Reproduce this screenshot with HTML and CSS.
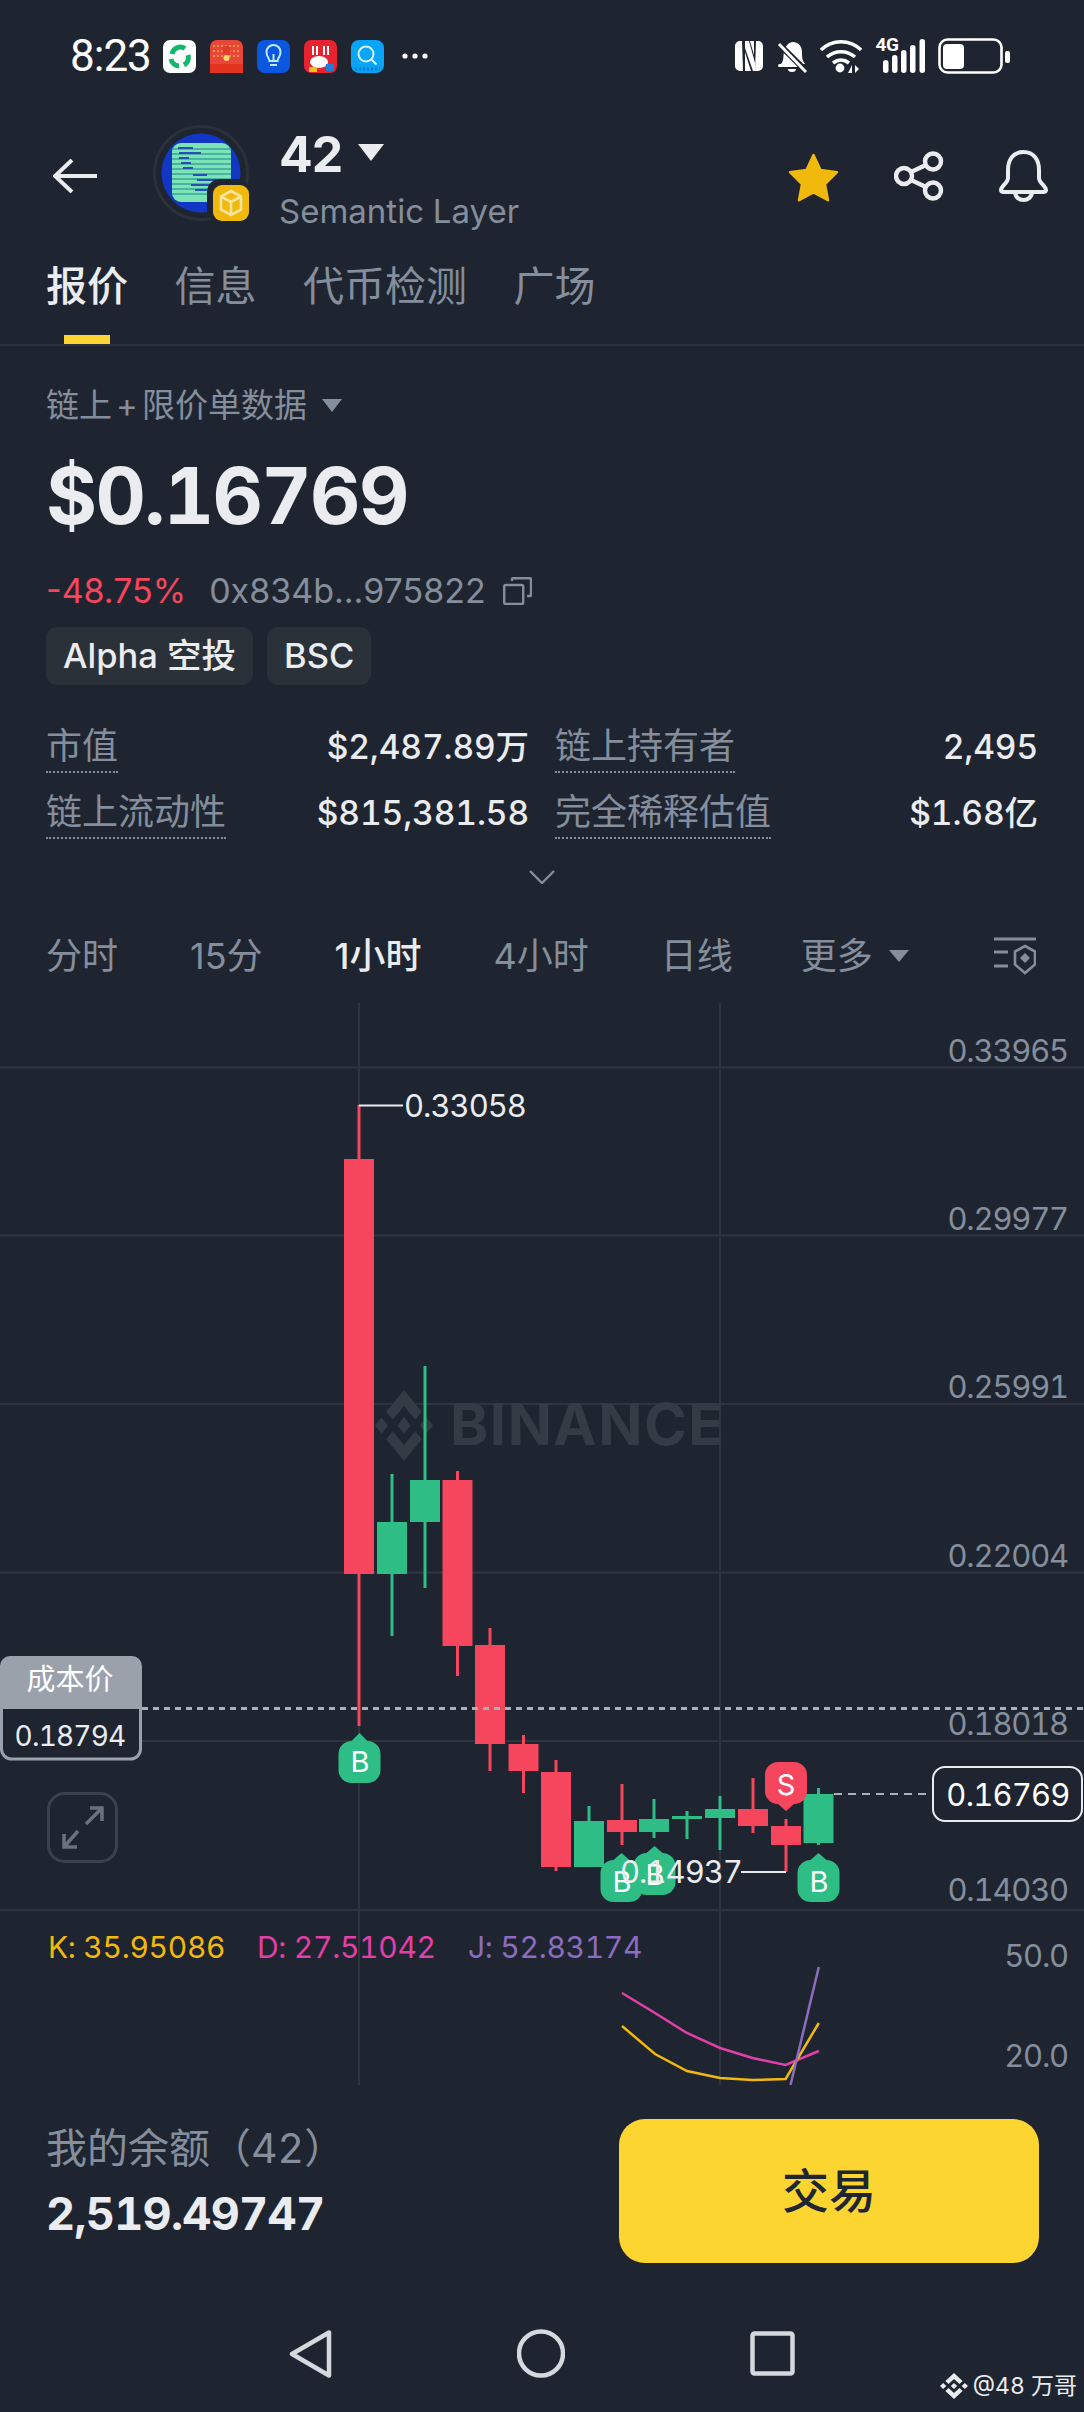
FILE: index.html
```html
<!DOCTYPE html>
<html lang="zh">
<head>
<meta charset="utf-8">
<title>42 Semantic Layer</title>
<link rel="stylesheet" href="styles.css">
</head>
<body>
<div class="page">
  <div class="status">
    <span class="time">8:23</span>
    <div class="apps">
      <svg class="app" viewBox="0 0 33 33"><rect width="33" height="33" rx="7" fill="#fff"/><path d="M9 14a8.500 8.500 0 0 1 13-5.500M25 15a8.500 8.500 0 0 1-4 10M16 26a8.500 8.500 0 0 1-8-7" fill="none" stroke="#12b76a" stroke-width="5"/></svg>
      <svg class="app" viewBox="0 0 33 33"><rect width="33" height="33" rx="7" fill="#e8463a"/><path d="M3 6h27M3 11h27M3 16h27" stroke="#f2913f" stroke-width="2" stroke-dasharray="2 2"/><rect y="24" width="33" height="9" fill="#e2331f"/><circle cx="16.500" cy="10" r="4" fill="#e23a28"/><circle cx="16.500" cy="18" r="3" fill="#ffd76a"/></svg>
      <svg class="app" viewBox="0 0 33 33"><rect width="33" height="33" rx="8" fill="#0b57e0"/><path d="M12.500 21c0-3-3-4-3-9a7 7 0 0 1 14 0c0 5-3 6-3 9zM13 25h7M16.500 21v-7" fill="none" stroke="#bfe9ff" stroke-width="2"/></svg>
      <svg class="app" viewBox="0 0 33 33"><rect width="33" height="33" rx="7" fill="#e8232f"/><path d="M9 6v9M13 6v9M20 6v9M24 6v9" stroke="#fff" stroke-width="2"/><ellipse cx="15" cy="22" rx="9" ry="6" fill="#fff"/><rect x="5" y="27" width="8" height="5" fill="#f4c020"/><rect x="22" y="24" width="8" height="7" fill="#1f7fd8"/></svg>
      <svg class="app" viewBox="0 0 33 33"><rect width="33" height="33" rx="8" fill="#08a4f6"/><circle cx="15" cy="14" r="7.500" fill="none" stroke="#d9f3ff" stroke-width="2"/><path d="M20.500 19.500l5 5" stroke="#d9f3ff" stroke-width="2"/><path d="M4 29h25" stroke="#0a78d0" stroke-width="3" stroke-dasharray="2 2"/></svg>
    </div>
    <svg class="dots" viewBox="0 0 26 6"><circle cx="3" cy="3" r="2.600" fill="#fff"/><circle cx="13" cy="3" r="2.600" fill="#fff"/><circle cx="23" cy="3" r="2.600" fill="#fff"/></svg>
    <div class="sys">
      <svg class="s-nfc" viewBox="0 0 30 32"><path d="M8 1H6a5 5 0 0 0-5 5v20a5 5 0 0 0 5 5h3zM22 1h2a5 5 0 0 1 5 5v20a5 5 0 0 1-5 5h-3z" fill="#fff"/><path d="M11 1h4l6 22V31h-2L11 8z" fill="#fff"/><path d="M11 12l6 19h-6zM16 1h4v14z" fill="#fff"/></svg>
      <svg class="s-bell" viewBox="0 0 30 33"><path d="M4 24c3-3 2-7 3-12C8 6 12 2 16 2c5 0 9 4 9 10 0 5 0 8 3 12z" fill="#fff"/><rect x="1" y="24" width="24" height="3" rx="1.500" fill="#fff"/><path d="M11 29h8a4 3 0 0 1-8 0z" fill="#fff"/><path d="M1 3l28 28" stroke="#1f2530" stroke-width="6"/><path d="M2 4l27 28" stroke="#fff" stroke-width="3"/></svg>
      <svg class="s-wifi" viewBox="0 0 44 34"><path d="M2 11c11-11 29-11 40 0M8 18c8-7 20-7 28 0M14 24c5-4 11-4 16 0" fill="none" stroke="#fff" stroke-width="3.600"/><circle cx="21" cy="29" r="4.400" fill="#fff"/><path d="M33 34v-8l-4 8zM36 26v8l4-4z" fill="#fff"/></svg>
      <div class="s-signal">
        <span class="s-4g">4G</span>
        <svg class="s-bars" viewBox="0 0 43 34"><rect x="0" y="21" width="5.500" height="13" rx="2.700" fill="#fff"/><rect x="9" y="16" width="5.500" height="18" rx="2.700" fill="#fff"/><rect x="18" y="11" width="5.500" height="23" rx="2.700" fill="#fff"/><rect x="27" y="6" width="5.500" height="28" rx="2.700" fill="#fff"/><rect x="36.500" y="0" width="5.500" height="34" rx="2.700" fill="#fff"/></svg>
      </div>
      <svg class="s-batt" viewBox="0 0 72 36"><rect x="1.500" y="1.500" width="62" height="33" rx="8" fill="none" stroke="#fff" stroke-width="2.600"/><rect x="5" y="6" width="21" height="25" rx="4" fill="#fff"/><rect x="67" y="13" width="5" height="12" rx="2" fill="#fff"/></svg>
    </div>
  </div>

  <div class="header">
    <svg class="back" viewBox="0 0 44 34"><path d="M19 1L2 17l17 16M2 17h42" fill="none" stroke="#eaecef" stroke-width="4"/></svg>
    <svg class="avatar" viewBox="0 0 97 97">
      <circle cx="48" cy="48" r="46.500" fill="#1f2530" stroke="#2b3139" stroke-width="3"/>
      <circle cx="48" cy="48" r="39.500" fill="#1237c4"/>
      <rect x="19" y="18" width="59" height="59" rx="9" fill="#7be3b4"/>
      <path d="M19 24h59M19 29h59M19 34h59M19 39h59M19 44h59M19 49h59M19 54h59M19 59h59M19 64h59M19 69h59" stroke="#3aa5a0" stroke-width="1.400"/>
      <path d="M25 23h15M26 28h22M26 33h10M28 38h10M30 43h10M40 50h14M44 55h20M38 60h24M42 65h12" stroke="#2650b8" stroke-width="2"/>
      <rect x="54" y="54" width="43" height="43" rx="13" fill="#1f2530"/>
      <rect x="60" y="60" width="36" height="36" rx="9" fill="#f0b90b"/>
      <path d="M78 66l10 5.500v13L78 90l-10-5.500v-13zM68 71.500l10 5.500 10-5.500M78 77v13" fill="none" stroke="#fbe4a0" stroke-width="2.600"/>
    </svg>
    <div class="title">
      <div class="title-row"><span class="symbol">42</span><span class="tri tri-title"></span></div>
      <div class="subtitle">Semantic Layer</div>
    </div>
    <div class="actions">
      <svg class="star" viewBox="0 0 51 49"><path d="M25.500 2l7 15 16.500 2.200-12 12 3 16-14.500-7.800L11 47.200l3-16-12-12L18.500 17z" fill="#f0b90b" stroke="#f0b90b" stroke-width="2.500" stroke-linejoin="round"/></svg>
      <svg class="share" viewBox="0 0 50 50"><circle cx="39" cy="10.500" r="8" fill="none" stroke="#eaecef" stroke-width="4.500"/><circle cx="10" cy="25" r="8" fill="none" stroke="#eaecef" stroke-width="4.500"/><circle cx="39" cy="39.500" r="8" fill="none" stroke="#eaecef" stroke-width="4.500"/><path d="M17 21l15-7M17 29l15 7" stroke="#eaecef" stroke-width="4.500"/></svg>
      <svg class="bell" viewBox="0 0 49 52"><path d="M24.500 2C14 2 9 10 9 20v8c0 5-7 8-7 12 0 1.500 1 2 3 2h39c2 0 3-.5 3-2 0-4-7-7-7-12v-8C40 10 35 2 24.500 2z" fill="none" stroke="#eaecef" stroke-width="4"/><path d="M16 42c0 5 4 8 8.500 8S33 47 33 42" fill="none" stroke="#eaecef" stroke-width="4"/></svg>
    </div>
  </div>

  <div class="tabs">
    <div class="tab tab-on">报价<span class="tab-bar"></span></div>
    <div class="tab">信息</div>
    <div class="tab">代币检测</div>
    <div class="tab">广场</div>
  </div>

  <div class="info">
    <div class="source"><span class="source-text">链上 + 限价单数据</span><span class="tri tri-src"></span></div>
    <div class="price">$0.16769</div>
    <div class="change"><span class="pct">-48.75%</span><span class="addr">0x834b...975822</span>
      <svg class="copy" viewBox="0 0 29 28"><rect x="1.200" y="8" width="19" height="19" rx="1.500" fill="none" stroke="#848e9c" stroke-width="2.400"/><path d="M9 4V2.200a1 1 0 0 1 1-1h17a1 1 0 0 1 1 1V18a1 1 0 0 1-1 1h-3" fill="none" stroke="#848e9c" stroke-width="2.400"/></svg>
    </div>
    <div class="chips"><span class="chip">Alpha 空投</span><span class="chip">BSC</span></div>
    <div class="stats">
      <div class="stat"><span class="k">市值</span><span class="v">$2,487.89万</span></div>
      <div class="stat"><span class="k">链上持有者</span><span class="v">2,495</span></div>
      <div class="stat"><span class="k">链上流动性</span><span class="v">$815,381.58</span></div>
      <div class="stat"><span class="k">完全稀释估值</span><span class="v">$1.68亿</span></div>
    </div>
    <svg class="chev" viewBox="0 0 26 14"><path d="M1 1l12 12L25 1" fill="none" stroke="#848e9c" stroke-width="2.400"/></svg>
  </div>

  <div class="periods">
    <span class="per">分时</span>
    <span class="per">15分</span>
    <span class="per per-on">1小时</span>
    <span class="per">4小时</span>
    <span class="per">日线</span>
    <span class="per per-more">更多<span class="tri tri-more"></span></span>
    <svg class="per-ico" viewBox="0 0 42 38"><path d="M0 2h42M0 15h14M0 29h14" stroke="#848e9c" stroke-width="3"/><path d="M31 9l10 5.500v13L31 36l-10-8.500v-13z" fill="none" stroke="#848e9c" stroke-width="2.600"/><path d="M31 16l5 5-5 5-5-5z" fill="#848e9c"/></svg>
  </div>

  <svg class="chart" viewBox="0 1003 1084 1082">
    <g class="grid">
      <path d="M0 1067.500H1084M0 1235.500H1084M0 1404H1084M0 1572.500H1084M0 1741H1084M0 1910H1084M359 1003V2085M720 1003V2085"/>
    </g>
    <svg x="375" y="1390" width="58" height="71" viewBox="0 0 126.610 126.610" preserveAspectRatio="none" class="wm">
      <path d="M38.730 53.200l24.590-24.580 24.600 24.600 14.300-14.310L63.320 0 24.430 38.900zM0 63.310L14.300 49l14.310 14.310-14.310 14.300zM38.730 73.410L63.320 98l24.600-24.600 14.310 14.290-38.900 38.910-38.910-38.880zM98 63.310L112.300 49l14.310 14.300-14.310 14.320zM77.830 63.300L63.320 48.780 48.810 63.280l14.510 14.500z"/>
    </svg>
    <text class="wm-text" x="450" y="1445">BINANCE</text>

    <g class="red">
      <rect x="344" y="1159" width="30" height="415"/><rect x="357.500" y="1105" width="3" height="621"/>
      <rect x="442.500" y="1480" width="30" height="166"/><rect x="456" y="1471" width="3" height="205"/>
      <rect x="475" y="1645" width="30" height="99"/><rect x="488.500" y="1628" width="3" height="143"/>
      <rect x="508.500" y="1744" width="30" height="27"/><rect x="522" y="1735" width="3" height="58"/>
      <rect x="541" y="1772" width="30" height="95"/><rect x="554.500" y="1760" width="3" height="111"/>
      <rect x="607" y="1820" width="30" height="12"/><rect x="620.500" y="1784" width="3" height="61"/>
      <rect x="738" y="1809" width="30" height="17"/><rect x="751.500" y="1778" width="3" height="55"/>
      <rect x="771" y="1826" width="30" height="19"/><rect x="784.500" y="1819" width="3" height="53"/>
    </g>
    <g class="green">
      <rect x="377" y="1522" width="30" height="52"/><rect x="390.500" y="1474" width="3" height="162"/>
      <rect x="410" y="1480" width="30" height="42"/><rect x="423.500" y="1366" width="3" height="222"/>
      <rect x="574" y="1821" width="30" height="46"/><rect x="587.500" y="1806" width="3" height="61"/>
      <rect x="639" y="1819" width="30" height="13"/><rect x="652.500" y="1799" width="3" height="39"/>
      <rect x="672" y="1816" width="30" height="3"/><rect x="685.500" y="1811" width="3" height="28"/>
      <rect x="705" y="1809" width="30" height="9"/><rect x="718.500" y="1796" width="3" height="54"/>
      <rect x="803.500" y="1794" width="30" height="49"/><rect x="817" y="1788" width="3" height="57"/>
    </g>

    <path class="ext-line" d="M359 1105.500H403M741 1872H786"/>
    <text class="ext" x="404" y="1117">0.33058</text>

    <g class="marker-b">
      <path d="M359.500 1733l8 8a13 13 0 0 1 13 13v16a13 13 0 0 1-13 13h-16a13 13 0 0 1-13-13v-16a13 13 0 0 1 13-13z"/>
      <path d="M621.500 1853l8 7a13 13 0 0 1 13 13v16a13 13 0 0 1-13 13h-16a13 13 0 0 1-13-13v-16a13 13 0 0 1 13-13z"/>
      <path d="M654.500 1846l8 7a13 13 0 0 1 13 13v16a13 13 0 0 1-13 13h-16a13 13 0 0 1-13-13v-16a13 13 0 0 1 13-13z"/>
      <path d="M818.500 1853l8 7a13 13 0 0 1 13 13v16a13 13 0 0 1-13 13h-16a13 13 0 0 1-13-13v-16a13 13 0 0 1 13-13z"/>
    </g>
    <path class="marker-s" d="M786 1811l-8-7a13 13 0 0 1-13-13v-16a13 13 0 0 1 13-13h16a13 13 0 0 1 13 13v16a13 13 0 0 1-13 13z"/>
    <text class="mk" x="360" y="1772">B</text>
    <text class="mk" x="622" y="1892">B</text>
    <text class="mk" x="655" y="1885">B</text>
    <text class="mk" x="819" y="1892">B</text>
    <text class="mk" x="786" y="1795">S</text>
    <text class="ext" x="620" y="1883">0.14937</text>

    <path class="cost-line" d="M142 1708.500H1084"/>
    <path class="now-line" d="M834 1794H932"/>

    <path class="cost-top" d="M0 1709v-43a10 10 0 0 1 10-10h122a10 10 0 0 1 10 10v43z"/>
    <text class="cost-name" x="70" y="1690">成本价</text>
    <path class="cost-box" d="M1.500 1709v40a10 10 0 0 0 10 10h119a10 10 0 0 0 10-10v-40"/>
    <text class="cost-val" x="70" y="1746">0.18794</text>

    <rect class="now-box" x="933" y="1767" width="149" height="54" rx="12"/>
    <text class="now-val" x="1008" y="1806">0.16769</text>

    <rect class="expand" x="48.500" y="1793.500" width="68" height="68" rx="16"/>
    <path class="expand-ico" d="M86 1824l16-16M90 1808h12v13M78 1831l-14 16M64 1834v13h13"/>

    <g class="axis">
      <text x="1068" y="1062">0.33965</text>
      <text x="1068" y="1230">0.29977</text>
      <text x="1068" y="1398">0.25991</text>
      <text x="1068" y="1567">0.22004</text>
      <text x="1068" y="1735">0.18018</text>
      <text x="1068" y="1901">0.14030</text>
      <text x="1068" y="1967">50.0</text>
      <text x="1068" y="2067">20.0</text>
    </g>
    <text class="kdj kdj-k" x="48" y="1958">K: 35.95086</text>
    <text class="kdj kdj-d" x="257" y="1958">D: 27.51042</text>
    <text class="kdj kdj-j" x="468" y="1958">J: 52.83174</text>
    <polyline class="line-d" points="622,1993 655,2013 687,2033 720,2048 752.500,2058 785.600,2065 818.800,2051"/>
    <polyline class="line-k" points="622,2026 655,2054 687,2071 720,2078 752.500,2080 785.600,2079 818.800,2023"/>
    <polyline class="line-j" points="790.500,2085 818.800,1967"/>
  </svg>

  <div class="balance">
    <div class="bal-text">
      <div class="bal-label">我的余额（42）</div>
      <div class="bal-num">2,519.49747</div>
    </div>
    <div class="trade">交易</div>
  </div>

  <div class="nav">
    <svg class="nav-back" viewBox="0 0 43 48"><path d="M40 2.500v43L3 24z" fill="none" stroke="#d5d8dc" stroke-width="4.500" stroke-linejoin="round"/></svg>
    <svg class="nav-home" viewBox="0 0 48 49"><circle cx="24" cy="24.500" r="22" fill="none" stroke="#d5d8dc" stroke-width="4.500"/></svg>
    <svg class="nav-sq" viewBox="0 0 45 45"><rect x="2.500" y="2.500" width="40" height="40" rx="2" fill="none" stroke="#d5d8dc" stroke-width="4.500"/></svg>
  </div>

  <div class="credit">
    <svg class="credit-logo" viewBox="0 0 126.610 126.610" preserveAspectRatio="none"><path d="M38.730 53.200l24.590-24.580 24.600 24.600 14.300-14.310L63.320 0 24.430 38.900zM0 63.310L14.300 49l14.310 14.310-14.310 14.300zM38.730 73.410L63.320 98l24.600-24.600 14.310 14.290-38.900 38.910-38.910-38.880zM98 63.310L112.300 49l14.310 14.300-14.310 14.320zM77.830 63.300L63.320 48.780 48.810 63.280l14.510 14.500z" fill="#eaecef"/></svg>
    <span>@48 万哥</span>
  </div>
</div>
</body>
</html>
```
FILE: styles.css
```css
* { box-sizing: border-box; }
html, body { margin: 0; padding: 0; background: #1f2530; }
body { font-family: Inter, "Noto Sans CJK SC", sans-serif; color: #eaecef; font-variant-numeric: tabular-nums; }
.page { position: relative; width: 1084px; height: 2412px; overflow: hidden; background: #1f2530; }
svg { display: block; flex: none; }

.status { display: flex; align-items: center; height: 112px; padding-left: 70px; padding-right: 74px; }
.time { font-family: Roboto, sans-serif; font-size: 44px; letter-spacing: -1px; line-height: 48px; color: #fff; width: 81px; margin-right: 12px; white-space: nowrap; }
.apps { display: flex; gap: 14px; }
.app { width: 33px; height: 33px; }
.dots { width: 26px; height: 6px; margin-left: 18px; }
.sys { display: flex; align-items: center; gap: 12.5px; margin-left: auto; }
.s-nfc { width: 30px; height: 32px; }
.s-bell { width: 30px; height: 33px; }
.s-wifi { width: 44px; height: 34px; }
.s-signal { display: flex; flex-direction: column; width: 50px; height: 36px; position: relative; }
.s-4g { position: absolute; left: 0; top: -3px; font-family: Roboto, sans-serif; font-size: 19px; font-weight: 700; line-height: 20px; color: #fff; letter-spacing: -0.5px; }
.s-bars { width: 43px; height: 34px; margin: 1px 0 0 7px; }
.s-batt { width: 72px; height: 36px; }

.header { display: flex; align-items: flex-start; height: 150px; padding: 13px 36px 0 53px; }
.back { width: 44px; height: 34px; margin-top: 34px; }
.avatar { width: 97px; height: 97px; margin-left: 56px; }
.title { margin-left: 29px; }
.title-row { display: flex; align-items: center; height: 58px; }
.symbol { font-size: 50px; line-height: 58px; font-weight: 700; font-variant-numeric: normal; letter-spacing: -1px; }
.tri { display: inline-block; width: 0; height: 0; border-style: solid; border-color: #848e9c transparent transparent transparent; }
.tri-title { border-width: 17px 13px 0 13px; border-top-color: #eaecef; margin-left: 16px; margin-top: -4px; }
.subtitle { margin-top: 8px; font-size: 33px; line-height: 40px; color: #848e9c; }
.actions { display: flex; align-items: flex-start; margin-left: auto; }
.star { width: 51px; height: 49px; margin-top: 28px; }
.share { width: 50px; height: 50px; margin-top: 26px; margin-left: 55px; }
.bell { width: 49px; height: 52px; margin-top: 25px; margin-left: 55px; }

.tabs { display: flex; gap: 46.500px; height: 84px; padding-left: 46px; border-bottom: 2px solid #2b3139; }
.tab { display: flex; flex-direction: column; align-items: center; font-size: 41px; line-height: 48px; color: #848e9c; }
.tab-on { color: #eaecef; font-weight: 500; }
.tab-bar { width: 46px; height: 9px; margin-top: 25px; background: #fcd535; }

.info { padding: 39px 46px 0 46px; }
.source { display: flex; align-items: center; height: 40px; font-size: 33px; line-height: 40px; color: #848e9c; }
.source-text { word-spacing: -4.500px; }
.tri-src { border-width: 13px 10.500px 0 10.500px; margin-left: 15px; }
.price { margin-top: 23px; font-size: 78px; line-height: 96px; font-weight: 700; letter-spacing: -1.600px; color: #eaecef; }
.change { display: flex; align-items: center; height: 44px; margin-top: 25px; font-size: 34px; line-height: 44px; font-variant-numeric: normal; }
.pct { color: #f6465d; }
.addr { margin-left: 23px; color: #848e9c; }
.copy { width: 29px; height: 28px; margin-left: 17px; }
.chips { display: flex; gap: 14px; margin-top: 14px; }
.chip { display: block; height: 58px; padding: 0 17px; background: #2b3139; border-radius: 11px; font-size: 34.500px; line-height: 58px; font-weight: 500; }
.stats { display: grid; grid-template-columns: 483px 483px; column-gap: 26px; row-gap: 16px; margin-top: 37px; }
.stat { display: flex; justify-content: space-between; align-items: center; height: 50px; }
.k { display: block; height: 52px; font-size: 36px; line-height: 50px; color: #848e9c; border-bottom: 2px dotted #848e9c; }
.v { font-size: 33.500px; line-height: 50px; font-weight: 500; letter-spacing: -0.100px; }
.chev { width: 26px; height: 14px; margin: 32px 0 0 483px; }

.periods { display: flex; align-items: center; gap: 72px; height: 50px; margin-top: 47px; padding: 0 48px 0 46px; font-size: 36px; line-height: 50px; color: #848e9c; font-variant-numeric: normal; }
.per-on { color: #eaecef; font-weight: 500; }
.per-more { display: flex; align-items: center; margin-left: -4px; }
.tri-more { border-width: 12px 10px 0 10px; margin-left: 16px; }
.per-ico { width: 42px; height: 38px; margin-left: auto; }

.chart { width: 1084px; height: 1082px; margin-top: 22px; font-family: Inter, "Noto Sans CJK SC", sans-serif; overflow: hidden; }
.grid path { stroke: #2f3540; stroke-width: 2; fill: none; }
.wm path { fill: #343b45; }
.wm-text { font-size: 58px; font-weight: 700; letter-spacing: 1.500px; fill: #343b45; font-variant-numeric: normal; }
.red rect { fill: #f6465d; }
.green rect { fill: #2ebd85; }
.ext-line { stroke: #eaecef; stroke-width: 2; fill: none; }
.ext { font-size: 31px; letter-spacing: -1px; fill: #eaecef; }
.marker-b path { fill: #2ebd85; }
.marker-s { fill: #f6465d; }
.mk { font-size: 29px; fill: #fff; text-anchor: middle; }
.cost-line { stroke: #aab0b9; stroke-width: 3; stroke-dasharray: 6 5; fill: none; }
.now-line { stroke: #aab0b9; stroke-width: 2; stroke-dasharray: 8 6; fill: none; }
.cost-top { fill: #9aa1ab; }
.cost-name { font-size: 29px; fill: #fff; text-anchor: middle; }
.cost-box { fill: #1f2530; stroke: #9aa1ab; stroke-width: 3; }
.cost-val { font-size: 28px; letter-spacing: -0.800px; fill: #eaecef; text-anchor: middle; }
.now-box { fill: #1f2530; stroke: #eaecef; stroke-width: 2; }
.now-val { font-size: 31px; letter-spacing: -0.800px; fill: #fff; text-anchor: middle; }
.expand { fill: none; stroke: #3b414c; stroke-width: 3; }
.expand-ico { fill: none; stroke: #6b727d; stroke-width: 3.500; }
.axis text { font-size: 31px; letter-spacing: -1.200px; fill: #848e9c; text-anchor: end; }
.kdj { font-size: 30px; letter-spacing: -0.300px; }
.kdj-k { fill: #f0b90b; }
.kdj-d { fill: #e040a8; }
.kdj-j { fill: #8c6cc0; }
.line-d, .line-k, .line-j { fill: none; stroke-width: 2.500; }
.line-d { stroke: #e040a8; }
.line-k { stroke: #f0b90b; }
.line-j { stroke: #8c6cc0; }

.balance { display: flex; justify-content: space-between; height: 178px; padding: 34px 45px 0 46px; }
.bal-label { margin-top: 1px; font-size: 41px; line-height: 56px; color: #848e9c; }
.bal-num { margin-top: 10px; font-size: 45px; line-height: 56px; font-weight: 700; letter-spacing: -0.700px; }
.trade { width: 420px; height: 144px; border-radius: 26px; background: #fdd530; color: #202630; font-size: 47px; line-height: 144px; text-align: center; font-weight: 500; }

.nav { display: flex; align-items: center; gap: 185px; padding: 66px 0 0 289px; }
.nav-back { width: 43px; height: 48px; }
.nav-home { width: 48px; height: 49px; }
.nav-sq { width: 45px; height: 45px; }

.credit { position: absolute; right: 7px; bottom: 13px; display: flex; align-items: center; gap: 5px; font-size: 23px; line-height: 26px; color: #eaecef; }
.credit-logo { width: 28px; height: 26px; }
```
